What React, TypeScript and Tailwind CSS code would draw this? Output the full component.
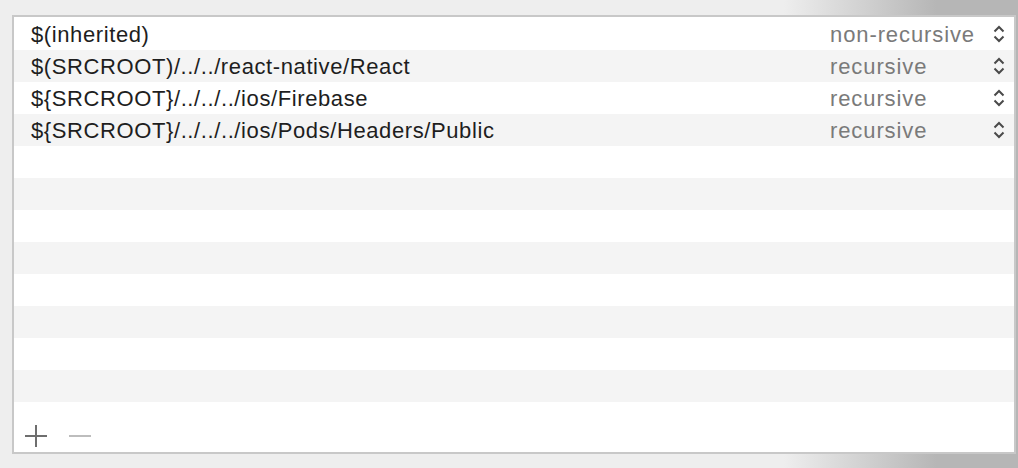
import React from "react";

const paths = [
  { path: "$(inherited)", mode: "non-recursive" },
  { path: "$(SRCROOT)/../../react-native/React", mode: "recursive" },
  { path: "${SRCROOT}/../../../ios/Firebase", mode: "recursive" },
  { path: "${SRCROOT}/../../../ios/Pods/Headers/Public", mode: "recursive" },
];

function UpDown() {
  return (
    <svg width="12" height="18" viewBox="0 0 12 18" className="shrink-0">
      <path d="M1.5 6.5 L6 2 L10.5 6.5" fill="none" stroke="#4a4a4a" strokeWidth="2" />
      <path d="M1.5 11.5 L6 16 L10.5 11.5" fill="none" stroke="#4a4a4a" strokeWidth="2" />
    </svg>
  );
}

export default function App() {
  const rows = Array.from({ length: 12 }, (_, i) => paths[i]);

  return (
    <div
      className="w-[1018px] h-[468px] pl-[12px] pt-[15px] bg-[linear-gradient(to_right,#eeeeee_77%,#b6b6b6_92%)]"
      style={{ fontFamily: '"Liberation Sans", Arial, sans-serif' }}
    >
      <div className="w-[1004px] h-[439px] border-2 border-[#c8c8c8] bg-white pt-px flex flex-col">
        <div className="flex flex-col">
          {rows.map((row, i) => (
            <div
              key={i}
              className={`h-8 flex items-center ${i % 2 === 1 ? "bg-[#f4f4f4]" : "bg-white"}`}
            >
              {row && (
                <>
                  <span className="flex-1 pl-[17px] pt-[2px] text-[22px] tracking-[0.6px] text-[#1e1e1e] leading-none">
                    {row.path}
                  </span>
                  <span className="w-[163px] pt-[2px] text-[22px] tracking-[0.9px] text-[#7a7a7a] leading-none">
                    {row.mode}
                  </span>
                  <UpDown />
                  <span className="w-[9px]" />
                </>
              )}
            </div>
          ))}
        </div>
        <div className="flex-1 flex items-end pb-[5px] pl-[11px] gap-[22px]">
          <svg width="22" height="22" viewBox="0 0 22 22">
            <path d="M11 0 V22 M0 11 H22" stroke="#6e6e6e" strokeWidth="2" />
          </svg>
          <svg width="22" height="22" viewBox="0 0 22 22">
            <path d="M0 11 H22" stroke="#bdbdbd" strokeWidth="2" />
          </svg>
        </div>
      </div>
    </div>
  );
}
